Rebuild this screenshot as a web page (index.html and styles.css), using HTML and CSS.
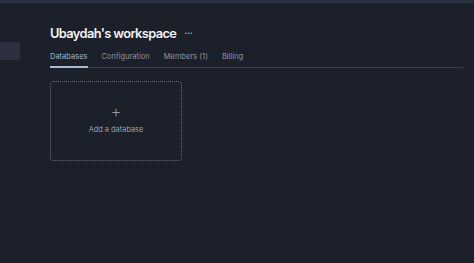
FILE: index.html
```html
<!DOCTYPE html>
<html lang="en">
<head>
    <meta charset="UTF-8">
    <meta name="viewport" content="width=device-width, initial-scale=1.0">
    <title>Ubaydah's workspace</title>
    <link rel="stylesheet" href="styles.css">
</head>
<body>
    <div class="topbar"></div>
    <div class="layout">
        <aside class="sidebar">
            <div class="nav-item"></div>
        </aside>
        <main class="main">
            <div class="title-row">
                <h1>Ubaydah's workspace</h1>
                <span class="more">&middot;&middot;&middot;</span>
            </div>
            <nav class="tabs">
                <a class="tab active">Databases</a>
                <a class="tab">Configuration</a>
                <a class="tab">Members (1)</a>
                <a class="tab">Billing</a>
            </nav>
            <div class="cards">
                <button class="add-card">
                    <span class="plus">+</span>
                    <span class="add-label">Add a database</span>
                </button>
            </div>
        </main>
    </div>
</body>
</html>
```

FILE: styles.css
```css
html, body {
    margin: 0;
    padding: 0;
    height: 100%;
}
body {
    font-family: Inter, "Noto Sans", sans-serif;
    background-color: #1b202b;
    color: #e8eaee;
    overflow: hidden;
}
.topbar {
    height: 3px;
    background-color: #2a3142;
}
.layout {
    display: flex;
}
.sidebar {
    width: 50px;
    flex-shrink: 0;
    padding-top: 39px;
}
.nav-item {
    width: 20px;
    height: 18px;
    background-color: #2b3141;
    border-radius: 0 3px 3px 0;
}
.main {
    flex: 1;
    padding-right: 11px;
}
.title-row {
    display: flex;
    align-items: center;
    gap: 8px;
    margin-top: 21px;
    height: 18px;
}
h1 {
    margin: 0;
    font-size: 12.8px;
    font-weight: 600;
    color: #f1f3f6;
    letter-spacing: -0.6px;
}
.more {
    color: #aab0bb;
    font-size: 11px;
    letter-spacing: -0.5px;
    margin-top: -1px;
}
.tabs {
    display: flex;
    gap: 14px;
    margin-top: 10px;
    border-bottom: 1px solid #383e4b;
}
.tab {
    font-size: 7.5px;
    color: #8e95a2;
    padding-bottom: 5px;
    border-bottom: 2px solid transparent;
    margin-bottom: -1px;
}
.tab.active {
    color: #9fb6cc;
    border-bottom-color: #a9bccf;
}
.cards {
    padding-top: 13px;
}
.add-card {
    width: 132px;
    height: 80px;
    background: transparent;
    border: 1px dotted #6a707c;
    border-radius: 4px;
    display: flex;
    flex-direction: column;
    align-items: center;
    justify-content: center;
    gap: 4px;
    padding: 0 0 6px;
    font-family: inherit;
    cursor: pointer;
}
.plus {
    color: #a6acb6;
    font-size: 18px;
    font-weight: 200;
    line-height: 18px;
}
.add-label {
    color: #9ca2ad;
    font-size: 7.4px;
}
```
